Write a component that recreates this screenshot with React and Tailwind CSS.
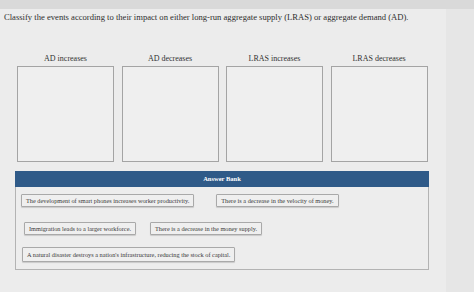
import React from "react";

const columns = ["AD increases", "AD decreases", "LRAS increases", "LRAS decreases"];

function Chip({ children, className = "" }) {
  return (
    <div
      className={`h-[13px] px-[4px] flex items-center border border-[#a9a9a9] bg-[#efefef] rounded-[1px] shadow-[0_1px_1px_rgba(0,0,0,0.15)] text-[6.3px] text-[#3a3a3a] whitespace-nowrap ${className}`}
    >
      {children}
    </div>
  );
}

export default function App() {
  return (
    <div className="w-[474px] h-[292px] flex flex-col bg-[#e2e2e2] font-['Liberation_Serif',serif] overflow-hidden">
      {/* top strip */}
      <div className="h-[9px] bg-[#d9d9d9]" />

      <div className="flex flex-1">
        {/* question panel */}
        <div className="w-[446px] bg-[#ececec] pt-[3px]">
          <p className="pl-[4px] text-[8.6px] leading-[11px] text-[#2e2e2e] whitespace-nowrap">
            Classify the events according to their impact on either long-run aggregate supply (LRAS) or aggregate demand (AD).
          </p>

          {/* drop targets */}
          <div className="flex gap-[7.5px] pl-[17px] mt-[31px]">
            {columns.map((c) => (
              <div key={c} className="w-[97px] flex flex-col items-center">
                <span className="text-[8px] leading-[10px] text-[#333]">{c}</span>
                <div className="mt-[2px] w-full h-[96px] border-[1.5px] border-[#a4a4a4] bg-[#efefef]" />
              </div>
            ))}
          </div>

          {/* answer bank */}
          <div className="ml-[15px] mt-[9px] w-[414px]">
            <div className="h-[16px] bg-[#2f5a88] flex items-center justify-center text-white text-[6.5px] font-bold">
              Answer Bank
            </div>
            <div className="h-[83px] border border-t-0 border-[#b3b3b3] bg-[#ededed] pt-[7px]">
              <div className="flex gap-[22px] pl-[5px]">
                <Chip>The development of smart phones increases worker productivity.</Chip>
                <Chip>There is a decrease in the velocity of money.</Chip>
              </div>
              <div className="flex gap-[14px] pl-[8px] mt-[15px]">
                <Chip>Immigration leads to a larger workforce.</Chip>
                <Chip>There is a decrease in the money supply.</Chip>
              </div>
              <div className="flex pl-[6px] mt-[12px]">
                <Chip className="h-[15px]">A natural disaster destroys a nation's infrastructure, reducing the stock of capital.</Chip>
              </div>
            </div>
          </div>
        </div>

        {/* right strip */}
        <div className="flex-1 bg-[#e6e6e6]" />
      </div>
    </div>
  );
}
